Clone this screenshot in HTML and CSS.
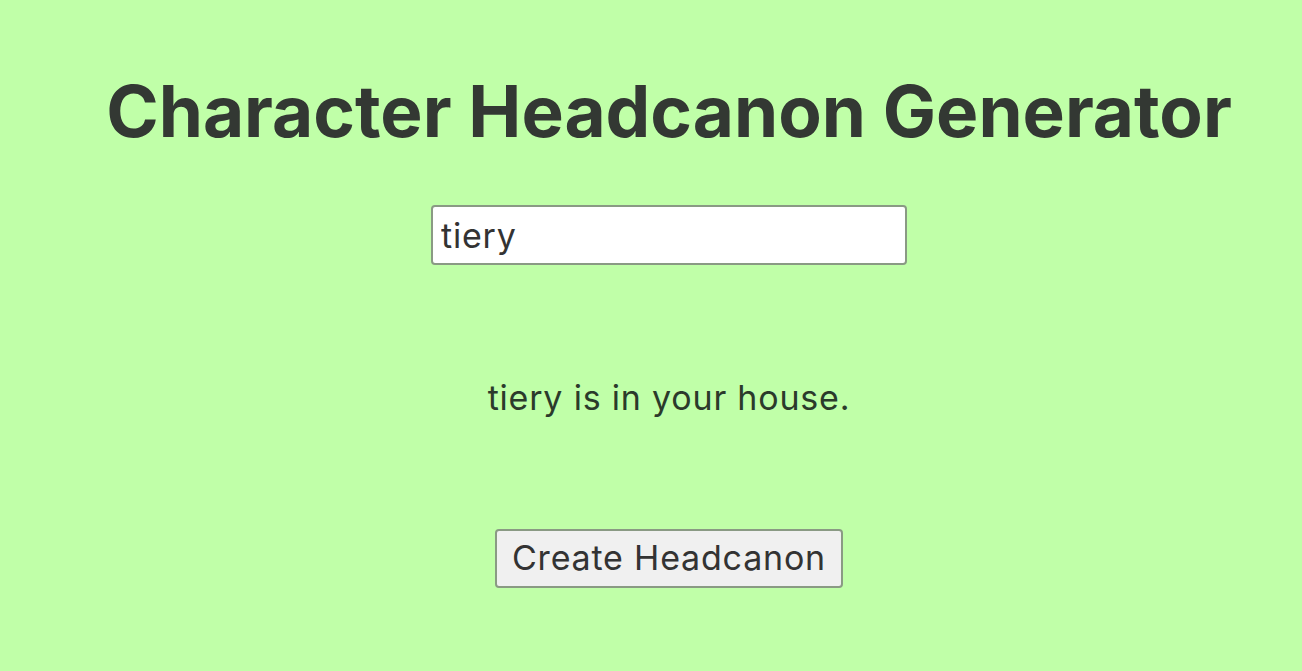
FILE: index.html
```html
<!DOCTYPE html>
<html lang="en">
<head>
<meta charset="utf-8">
<title>Character Headcanon Generator</title>
<link rel="stylesheet" href="styles.css">
</head>
<body>
  <main class="app">
    <h1 class="title">Character Headcanon Generator</h1>
    <input class="name-input" type="text" value="tiery">
    <p class="result">tiery is in your house.</p>
    <button class="create-btn" type="button">Create Headcanon</button>
  </main>
</body>
</html>
```

FILE: styles.css
```css
html, body {
  margin: 0;
  padding: 0;
  background: #c0ffa8;
}

body {
  font-family: Inter, "Open Sans", "Liberation Sans", sans-serif;
  color: #333833;
}

.app {
  display: flex;
  flex-direction: column;
  align-items: center;
  padding: 0 0 0 36px;
}

.title {
  margin: 66px 0 0;
  font-size: 71px;
  font-weight: 700;
  line-height: 90px;
  letter-spacing: 0;
}

.name-input {
  margin-top: 49px;
  width: 476px;
  height: 60px;
  box-sizing: border-box;
  padding: 0 8px;
  font: inherit;
  font-size: 34px;
  letter-spacing: 0.8px;
  color: #333;
  background: #fff;
  border: 2px solid #8a9a84;
  border-radius: 4px;
}

.result {
  margin: 110px 0 0;
  font-size: 34px;
  letter-spacing: 0.8px;
  line-height: 46px;
  color: #2b3a2b;
}

.create-btn {
  margin-top: 108px;
  height: 59px;
  box-sizing: border-box;
  padding: 0 15px 2px;
  font: inherit;
  font-size: 34px;
  letter-spacing: 0.8px;
  color: #333;
  background: #f0f0f0;
  border: 2px solid #8a9a84;
  border-radius: 4px;
}
```
